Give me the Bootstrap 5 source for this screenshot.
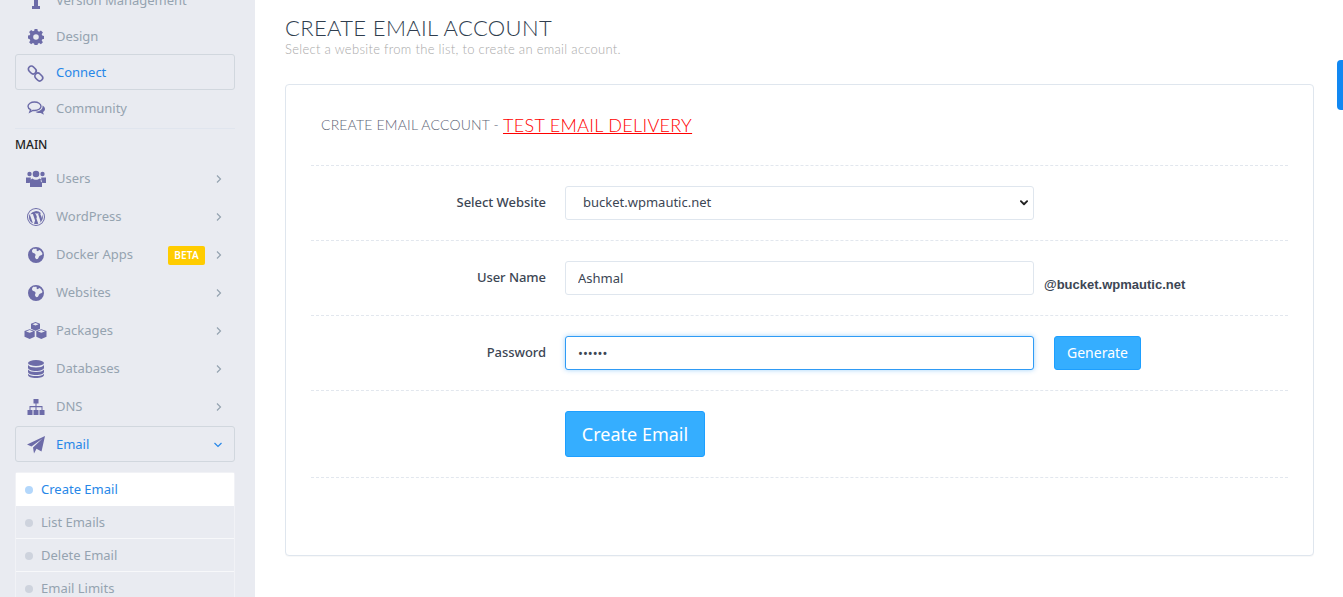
<!DOCTYPE html>
<html lang="en">
<head>
  <meta charset="UTF-8">
  <meta name="viewport" content="width=device-width, initial-scale=1">
  <title>Create Email Account</title>
  <link href="https://cdn.jsdelivr.net/npm/bootstrap@5.3.0/dist/css/bootstrap.min.css" rel="stylesheet">
  <style>
    html, body { height: 597px; overflow: hidden; }
    body { font-family: "Noto Sans", "Open Sans", sans-serif; font-size: 13px; color: #3c4654; background: #fff; }
    .page-wrap { height: 597px; overflow: hidden; }
    .side { width: 255px; flex: none; background: #e9ebf1; padding: 0 20px 0 15px; height: 597px; overflow: hidden; }
    .side-inner { margin-top: -18px; }
    .side-link { height: 36px; padding-top: 2px; display: flex; align-items: center; color: #95a3b0; text-decoration: none; border: 1px solid transparent; border-radius: 3px; position: relative; letter-spacing: -.02px; }
    .side-link.active-item { background: #e9ebf1; border-color: #d1d7de; color: #2787e8; }
    .main-list .side-link { margin-bottom: 2px; }
    .ico-box { width: 40px; flex: none; display: flex; justify-content: center; padding-right: 1px; }
    .ico-box svg { fill: #6c6ba8; display: block; }
    .side-sep { border-top: 1px solid #e0e5ee; margin-top: 2px; }
    .side-title { font-size: 12px; font-weight: 500; color: #222; height: 31px; line-height: 32px; }
    .arrow-ico { width: 6px; height: 8px; margin-right: 12px; margin-left: auto; flex: none; stroke: #95a3b0; fill: none; stroke-width: 1.2; }
    .arrow-ico.open-ico { stroke: #2787e8; width: 8px; height: 6px; margin-right: 12px; }
    .beta-tag { background: #fc0; color: #fff; font-size: 10px; font-weight: 600; letter-spacing: .2px; width: 37px; height: 19px; line-height: 19px; text-align: center; border-radius: 2px; margin-left: auto; }
    .beta-tag + .arrow-ico { margin-left: 11px; }
    .sub-list { margin-top: 10px; border-radius: 3px 3px 0 0; border: 1px solid #f1f2f6; border-bottom: 0; }
    .sub-link { height: 33px; padding: 2px 0 0 9px; display: flex; align-items: center; color: #95a3b0; text-decoration: none; border-bottom: 1px solid #f7f8fa; }
    .sub-link i { width: 8px; height: 8px; border-radius: 50%; background: #ced3dd; margin-right: 8px; flex: none; }
    .sub-link.now-item { background: #fff; color: #2787e8; border-bottom: 0; padding-top: 1px; }
    .sub-link.now-item i { background: #b3d7fb; }
    .content-col { padding: 15px 29px 0 30px; position: relative; }
    .page-head { font-family: Lato, sans-serif; font-weight: 300; font-size: 22px; line-height: 26px; color: #2f3d4e; letter-spacing: .35px; margin: 0; }
    .page-sub { font-family: Lato, sans-serif; font-weight: 300; font-size: 13px; line-height: 16px; color: #a9a9a9; letter-spacing: .3px; margin: 0 0 27px; }
    .mail-card { height: 472px; border: 1px solid #dfe6ee; border-radius: 4px; padding: 0 25px; box-shadow: 0 1px 1px rgba(0,0,0,.03); }
    .card-head { height: 80px; display: flex; align-items: center; padding: 1px 0 0 10px; font-family: Lato, sans-serif; font-weight: 300; font-size: 14px; letter-spacing: .18px; color: #5d6476; margin: 0; }
    .card-head a { font-size: 18px; letter-spacing: .3px; color: #f00; margin-left: 4px; }
    .form-line { border-top: 1px dashed #e2e7ee; height: 75px; display: flex; align-items: center; }
    .form-line:last-child { height: auto; }
    .form-line.btn-line { height: 87px; }
    .field-label { width: 235px; text-align: right; font-weight: 500; font-size: 13px; letter-spacing: -.05px; color: #3c4654; margin: 0 20px 0 0; flex: none; }
    .field-box { width: 469px; flex: none; margin-left: -1px; }
    .form-control.field-input, .form-select.field-input { height: 34px; min-height: 34px; font-size: 13px; color: #3c4654; border: 1px solid #dfe6ee; border-radius: 3px; padding: 0 12px; }
    .form-select.field-input { padding-left: 17px; background-position: right 2px center; background-size: 14px 10px; background-image: url("data:image/svg+xml,%3csvg xmlns='http://www.w3.org/2000/svg' viewBox='0 0 16 16'%3e%3cpath fill='none' stroke='%23222' stroke-linecap='round' stroke-linejoin='round' stroke-width='3' d='m3 5 5 5 5-5'/%3e%3c/svg%3e"); }
    .form-control.focus-look { border-color: #2f9bf5; box-shadow: 0 0 5px rgba(47,155,245,.45); }
    .domain-text { font-family: "Liberation Sans", Arial, sans-serif; font-weight: 700; font-size: 13px; margin: 14px 0 0 10px; color: #3c4654; }
    .btn.blue-btn { background: #35aeff; border: 1px solid #1d9fff; color: #fff; border-radius: 3px; }
    .btn.gen-btn { width: 87px; height: 34px; font-size: 14px; padding: 0 0 2px; margin-left: 20px; }
    .btn.big-btn { width: 140px; height: 46px; font-size: 18px; padding: 0; margin-left: 254px; }
    .edge-tab { position: absolute; right: 0; top: 60px; width: 6px; height: 50px; background: #1188f2; border-radius: 4px 0 0 4px; }
  </style>
</head>
<body>
  <div class="d-flex page-wrap">
    <aside class="side">
      <div class="side-inner">
        <a class="side-link" href="#"><span class="ico-box"><svg width="14" height="18" viewBox="0 0 14 18"><path d="M5 0h4v3H5zM4 5h5v9h2v3H3v-3h2V8H4z"/></svg></span>Version Management</a>
        <a class="side-link" href="#"><span class="ico-box"><svg width="16" height="16" viewBox="0 0 16 16"><path fill-rule="evenodd" d="M6.600 0h2.800l.4 2.100 1.300.6 1.800-1.200 2 2-1.200 1.800.6 1.300 2.100.4v2.800l-2.100.4-.6 1.300 1.200 1.800-2 2-1.800-1.200-1.300.6-.4 2.100H6.600l-.4-2.100-1.300-.6-1.800 1.200-2-2 1.200-1.800-.6-1.300L-.4 9.400V6.600l2.100-.4.6-1.300L1.100 3.100l2-2 1.800 1.200 1.300-.6zM8 5.200a2.800 2.800 0 1 0 0 5.600 2.800 2.800 0 0 0 0-5.600z"/></svg></span>Design</a>
        <a class="side-link active-item" href="#"><span class="ico-box"><svg width="17" height="17" viewBox="0 0 17 17"><g fill="none" stroke="#6c6ba8" stroke-width="1.700"><rect x="1" y="2" width="8.500" height="6" rx="3" transform="rotate(45 5.250 5)"/><rect x="7.500" y="9" width="8.500" height="6" rx="3" transform="rotate(45 11.750 12)"/></g></svg></span>Connect</a>
        <a class="side-link" href="#"><span class="ico-box"><svg width="18" height="16" viewBox="0 0 18 16"><path fill="none" stroke="#6c6ba8" stroke-width="1.400" d="M7.500 1C3.900 1 1 2.900 1 5.300c0 1.400 1 2.700 2.600 3.400L2.800 11l3-1.600c.5.1 1.100.1 1.700.1 3.600 0 6.500-1.900 6.500-4.200S11.100 1 7.500 1z"/><path d="M15.500 4.500C17 5.300 18 6.500 18 8c0 1.300-.8 2.400-2 3.100l.9 2.600-3.200-1.800c-2 .3-4.100-.1-5.500-1.200 3.800.2 8-2 7.300-6.200z"/></svg></span>Community</a>
        <div class="side-sep"></div>
        <div class="side-title">MAIN</div>
        <div class="main-list">
          <a class="side-link" href="#"><span class="ico-box"><svg width="20" height="18" viewBox="0 0 20 18"><circle cx="3.500" cy="4" r="2.200"/><circle cx="16.500" cy="4" r="2.200"/><circle cx="10" cy="4" r="3.300"/><path d="M0 7.500h4.800a4 4 0 0 0 .7 3.500L3.500 13H0zM20 7.500h-4.800a4 4 0 0 1-.7 3.500l2 2H20zM6.500 8.500c1.500 1.800 5.500 1.800 7 0 1.500.5 2.500 2 2.500 4V17H4v-4.500c0-2 1-3.500 2.500-4z"/></svg></span>Users<svg class="arrow-ico" viewBox="0 0 6 8"><path d="M1 .5 4.500 4 1 7.500"/></svg></a>
          <a class="side-link" href="#"><span class="ico-box"><svg width="18" height="18" viewBox="0 0 18 18"><path fill-rule="evenodd" d="M9 0a9 9 0 1 1 0 18A9 9 0 0 1 9 0zm0 1a8 8 0 1 0 0 16A8 8 0 0 0 9 1z"/><path d="M2 9a7 7 0 0 0 3.900 6.300L2.600 6.100A7 7 0 0 0 2 9zM9.100 9.600 7 15.800a7 7 0 0 0 4.300-.1zM13.800 4.900a7 7 0 0 0-10.500 1.300h.5l2.100-.1 2.500 7.400 1.500-4.400-1-2.900-.9-.1v-.6h4l-.8.700 2.400 7.200.7-2.200c.5-1.700.2-2.800-.4-3.800-.6-1-.7-1.800-.1-2.500zM15.300 6.500c.1 1.200-.2 2.300-.6 3.400l-2.100 5.200A7 7 0 0 0 15.300 6.500z"/></svg></span>WordPress<svg class="arrow-ico" viewBox="0 0 6 8"><path d="M1 .5 4.500 4 1 7.500"/></svg></a>
          <a class="side-link" href="#"><span class="ico-box"><svg width="16" height="16" viewBox="0 0 16 16"><path fill-rule="evenodd" d="M8 0a8 8 0 1 1 0 16A8 8 0 0 1 8 0zM6 1.500C4 2.500 3.500 4 4.500 5.500c1 1 2.500.5 3 2 .3 1-.5 1.500-.5 2.500 0 1.500 1.500 2.500 2.500 2 1-.5 1-2 2-3 1-.8 2.500-.7 3-2-.5-2-1.500-3-3-4-1 .5-1.500 1.500-2.500 1-.8-.5 0-1.500-.5-2.200-.8-.2-1.700-.1-2.500.200z"/></svg></span>Docker Apps<span class="beta-tag">BETA</span><svg class="arrow-ico" viewBox="0 0 6 8"><path d="M1 .5 4.500 4 1 7.500"/></svg></a>
          <a class="side-link" href="#"><span class="ico-box"><svg width="16" height="16" viewBox="0 0 16 16"><path fill-rule="evenodd" d="M8 0a8 8 0 1 1 0 16A8 8 0 0 1 8 0zM6 1.500C4 2.500 3.500 4 4.500 5.500c1 1 2.500.5 3 2 .3 1-.5 1.500-.5 2.500 0 1.500 1.500 2.500 2.500 2 1-.5 1-2 2-3 1-.8 2.500-.7 3-2-.5-2-1.500-3-3-4-1 .5-1.500 1.500-2.500 1-.8-.5 0-1.500-.5-2.200-.8-.2-1.700-.1-2.500.200z"/></svg></span>Websites<svg class="arrow-ico" viewBox="0 0 6 8"><path d="M1 .5 4.500 4 1 7.500"/></svg></a>
          <a class="side-link" href="#"><span class="ico-box"><svg width="23" height="18" viewBox="0 0 23 18"><path d="M11.500 0 16 1.800v5l-4.500 1.900L7 6.800v-5zM8.400 2.200l3.100 1.200 3.100-1.200-3.100-1.100z"/><path d="M5.700 7.200 10.700 9v5.800L5.700 17 .5 14.800V9zM2 9.400l3.700 1.400 3.500-1.400-3.500-1.300z"/><path d="M17.300 7.200 22.500 9v5.800L17.300 17l-5-2.200V9zM13.800 9.400l3.500 1.400 3.700-1.400-3.700-1.300z"/></svg></span>Packages<svg class="arrow-ico" viewBox="0 0 6 8"><path d="M1 .5 4.500 4 1 7.500"/></svg></a>
          <a class="side-link" href="#"><span class="ico-box"><svg width="16" height="18" viewBox="0 0 16 18"><ellipse cx="8" cy="3" rx="8" ry="3"/><path d="M0 5c1 1.700 4 2.500 8 2.500S15 6.700 16 5v2.800C16 9.600 12.400 11 8 11S0 9.600 0 7.800zM0 9.600c1 1.700 4 2.500 8 2.500s7-.8 8-2.500v2.500c0 1.700-3.600 3-8 3s-8-1.300-8-3z"/><path d="M0 13.700c1 1.500 4 2.400 8 2.400s7-.9 8-2.400V15c0 1.700-3.600 3-8 3s-8-1.300-8-3z"/></svg></span>Databases<svg class="arrow-ico" viewBox="0 0 6 8"><path d="M1 .5 4.500 4 1 7.500"/></svg></a>
          <a class="side-link" href="#"><span class="ico-box"><svg width="18" height="16" viewBox="0 0 18 16"><path d="M6.500 0h5v4.500h-2V7H15.500v4h2v5h-5v-5h2V8.200H9.500V11h2v5h-5v-5h2V8.200H3.500V11h2v5H.5v-5h2V7h6V4.500h-2z"/></svg></span>DNS<svg class="arrow-ico" viewBox="0 0 6 8"><path d="M1 .5 4.500 4 1 7.500"/></svg></a>
          <a class="side-link active-item" href="#"><span class="ico-box"><svg width="18" height="18" viewBox="0 0 18 18"><path d="M18 0 14.500 15.500 9.500 12.800 7 17.500 6 11.500 15.500 2.500 4.500 10.500 0 8.500z"/></svg></span>Email<svg class="arrow-ico open-ico" viewBox="0 0 8 6"><path d="M.5 1 4 4.500 7.500 1"/></svg></a>
        </div>
        <div class="sub-list">
          <a class="sub-link now-item" href="#"><i></i>Create Email</a>
          <a class="sub-link" href="#"><i></i>List Emails</a>
          <a class="sub-link" href="#"><i></i>Delete Email</a>
          <a class="sub-link" href="#"><i></i>Email Limits</a>
        </div>
      </div>
    </aside>
    <main class="flex-grow-1 content-col">
      <h1 class="page-head">CREATE EMAIL ACCOUNT</h1>
      <p class="page-sub">Select a website from the list, to create an email account.</p>
      <div class="mail-card bg-white">
        <h2 class="card-head"><span>CREATE EMAIL ACCOUNT -</span><a href="#">TEST EMAIL DELIVERY</a></h2>
        <form>
          <div class="form-line">
            <label class="field-label">Select Website</label>
            <div class="field-box"><select class="form-select field-input"><option>bucket.wpmautic.net</option></select></div>
          </div>
          <div class="form-line">
            <label class="field-label">User Name</label>
            <div class="field-box"><input class="form-control field-input" value="Ashmal"></div>
            <div class="domain-text">@bucket.wpmautic.net</div>
          </div>
          <div class="form-line">
            <label class="field-label">Password</label>
            <div class="field-box"><input class="form-control field-input focus-look" type="password" value="ashmal"></div>
            <button class="btn blue-btn gen-btn" type="button">Generate</button>
          </div>
          <div class="form-line btn-line">
            <button class="btn blue-btn big-btn" type="button">Create Email</button>
          </div>
          <div class="form-line"></div>
        </form>
      </div>
      <div class="edge-tab"></div>
    </main>
  </div>
  <script src="https://cdn.jsdelivr.net/npm/bootstrap@5.3.0/dist/js/bootstrap.bundle.min.js"></script>
</body>
</html>
